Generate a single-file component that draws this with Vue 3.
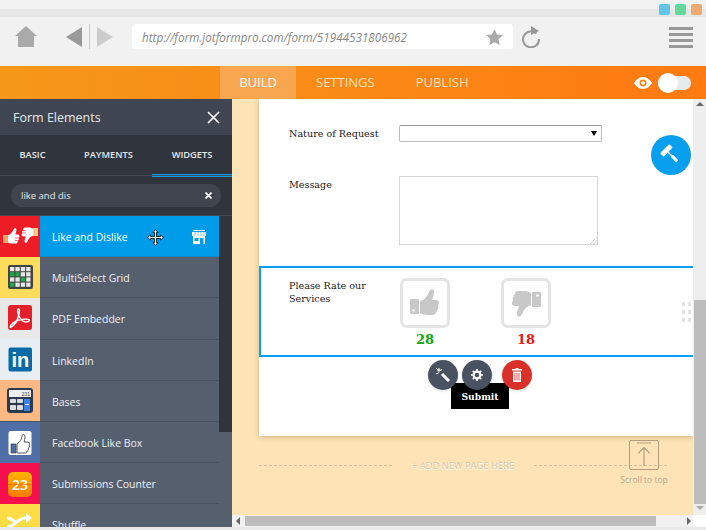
<script setup>
const tabs = [
  { name: 'BASIC', active: false },
  { name: 'PAYMENTS', active: false },
  { name: 'WIDGETS', active: true }
]

const widgets = [
  { id: 'like', title: 'Like and Dislike', bg: '#ee1c25' },
  { id: 'grid', title: 'MultiSelect Grid', bg: '#fddc5c' },
  { id: 'pdf', title: 'PDF Embedder', bg: '#e8e8e8' },
  { id: 'linkedin', title: 'LinkedIn', bg: '#e8eef1' },
  { id: 'bases', title: 'Bases', bg: '#fdb983' },
  { id: 'fb', title: 'Facebook Like Box', bg: '#4f6fa6' },
  { id: 'counter', title: 'Submissions Counter', bg: '#f5104d' },
  { id: 'shuffle', title: 'Shuffle', bg: '#fddc45' }
]

const gridCells = [
  0, 0, 0, 0,
  1, 1, 0, 0,
  0, 0, 1, 0,
  1, 0, 0, 0
]

const hand = 'M10 13c4-1 7-4 9-9 1-3 5-4 5 0 0 3-1 5-2 8h4c2 0 3 1 3 3 0 1-.5 2-1 2.500.5 1 .5 2.500-.5 3.500 0 1.500-.5 2.500-1.500 3 0 2-1 3-3 3h-6c-3 0-5-1-7-2z'
</script>

<template>
  <div class="page">
    <div class="titlebar">
      <span class="dot blue"></span>
      <span class="dot green"></span>
      <span class="dot peach"></span>
    </div>

    <div class="toolbar">
      <svg class="home" width="22" height="21" viewBox="0 0 22 21"><path d="M11 0 22 10h-3v11H3V10H0z" fill="#aaa" /></svg>
      <svg class="back" width="17" height="20" viewBox="0 0 17 20"><path d="M16 0v20L0 10z" fill="#999" /></svg>
      <span class="nav-sep"></span>
      <svg class="forward" width="17" height="20" viewBox="0 0 17 20"><path d="M1 0v20l16-10z" fill="#ccc" /></svg>
      <div class="url">
        <span>http://form.jotformpro.com/form/51944531806962</span>
        <svg width="17" height="16" viewBox="0 0 24 23"><path d="M12 0l3.6 7.8 8.4 1-6.2 5.8 1.6 8.4L12 18.900 4.600 23l1.600-8.400L0 8.800l8.400-1z" fill="#aaa" /></svg>
      </div>
      <svg class="reload" width="20" height="22" viewBox="0 0 20 22"><path d="M15.500 7.500A8 8 0 1 0 18 13" fill="none" stroke="#999" stroke-width="2" /><path d="M10 0l8 5-8 4z" fill="#999" /></svg>
      <div class="burger"><i></i><i></i><i></i><i></i></div>
    </div>

    <div class="topnav">
      <a class="active">BUILD</a>
      <a class="settings">SETTINGS</a>
      <a class="publish">PUBLISH</a>
      <svg class="eye" width="18" height="12" viewBox="0 0 18 12"><path d="M9 0c4 0 7 3 9 6-2 3-5 6-9 6S2 9 0 6c2-3 5-6 9-6z" fill="#fff" /><circle cx="9" cy="6" r="3.400" fill="#f98216" /><circle cx="9" cy="6" r="1.800" fill="#fff" /></svg>
      <div class="toggle"><span></span></div>
    </div>

    <div class="main">
      <aside class="panel">
        <div class="panel-head">
          <span>Form Elements</span>
          <svg width="13" height="13" viewBox="0 0 13 13"><path d="M1 1l11 11M12 1 1 12" stroke="#fff" stroke-width="1.700" /></svg>
        </div>
        <div class="tabs">
          <div v-for="tab in tabs" :key="tab.name" class="tab" :class="{ on: tab.active }">{{ tab.name }}</div>
        </div>
        <div class="search-wrap">
          <div class="search">
            <span>like and dis</span>
            <svg width="7" height="7" viewBox="0 0 7 7"><path d="M.5.5l6 6M6.500.5l-6 6" stroke="#fff" stroke-width="1.600" /></svg>
          </div>
        </div>
        <div class="list-wrap">
          <ul class="list">
            <li v-for="(w, i) in widgets" :key="w.id" class="row" :class="{ selected: i === 0 }">
              <div class="row-icon" :style="{ background: w.bg }">
                <svg v-if="w.id === 'like'" width="40" height="41" viewBox="0 0 40 41">
                  <rect x="3" y="19" width="5" height="8" fill="#f4a460" />
                  <rect x="33" y="12" width="5" height="8" fill="#f8c98a" />
                  <g transform="translate(2 11.400) scale(.6)"><path :d="hand" fill="#fff" /></g>
                  <g transform="translate(39 27.600) rotate(180) scale(.6)"><path :d="hand" fill="#fff" /></g>
                  <path d="M15 22h5M15 24.500h5M21 17h5M21 14.500h5" stroke="#ee1c25" stroke-width=".6" />
                </svg>
                <svg v-else-if="w.id === 'grid'" width="40" height="41" viewBox="0 0 40 41">
                  <rect x="8" y="8" width="25" height="24" rx="2" fill="#444" />
                  <rect v-for="(c, k) in gridCells" :key="k" :x="10 + (k % 4) * 5.400" :y="10 + Math.floor(k / 4) * 5.200" width="4.300" height="4.200" :fill="c ? '#1fa84a' : '#e8e8e8'" />
                </svg>
                <svg v-else-if="w.id === 'pdf'" width="40" height="41" viewBox="0 0 40 41">
                  <rect x="8" y="7" width="24" height="25" rx="3" fill="#e3202c" />
                  <path d="M10.500 29.500c4.500-2.500 7.500-8 8.500-13.500.5-3 .8-5-.5-5s-1 3.500 0 6c1.500 3.500 4.500 7 7.500 7 3.500 0 4.500-2 2.500-2.500-3-1-9 0-13 2-3 1.500-6.500 5-5 6" fill="none" stroke="#fff" stroke-width="1.400" />
                </svg>
                <svg v-else-if="w.id === 'linkedin'" width="40" height="41" viewBox="0 0 40 41">
                  <rect x="8.500" y="8.500" width="23.500" height="24" rx="2" fill="#0a6aa6" />
                  <text x="20.300" y="28" text-anchor="middle" class="in-text">in</text>
                </svg>
                <svg v-else-if="w.id === 'bases'" width="40" height="41" viewBox="0 0 40 41">
                  <rect x="7" y="8" width="26" height="25" rx="3" fill="#2c3a50" />
                  <rect x="9" y="10" width="22" height="7" fill="#eee" />
                  <text x="30" y="16" text-anchor="end" class="calc-text">231</text>
                  <rect x="10" y="19" width="6" height="4" rx="1" fill="#ddd" />
                  <rect x="17" y="19" width="6" height="4" rx="1" fill="#ddd" />
                  <rect x="10" y="25" width="6" height="5" rx="1" fill="#ddd" />
                  <rect x="17" y="25" width="6" height="5" rx="1" fill="#ddd" />
                  <rect x="24" y="19" width="6" height="12" fill="#3b82e6" />
                  <rect x="25" y="24" width="4" height="1" fill="#fff" />
                </svg>
                <svg v-else-if="w.id === 'fb'" width="40" height="41" viewBox="0 0 40 41">
                  <rect x="8.500" y="9" width="23" height="24" rx="2" fill="#fff" />
                  <rect x="11" y="22" width="5" height="9" fill="#4f6fa6" stroke="#333" stroke-width=".6" />
                  <path d="M17 22c3-2 5-5 5-8 0-2 3-2 3 1 0 2-.5 3-1 5h4c2 0 2 2 1 3 1 1 .5 3-.5 3 .5 2-.5 3-1.500 3 0 2-1 2-3 2h-7z" fill="#fff" stroke="#444" stroke-width=".9" />
                </svg>
                <svg v-else-if="w.id === 'counter'" width="40" height="41" viewBox="0 0 40 41">
                  <defs><linearGradient id="cnt" x1="0" y1="0" x2="0" y2="1"><stop offset="0" stop-color="#ffb400" /><stop offset="1" stop-color="#f97a00" /></linearGradient></defs>
                  <rect x="8" y="9" width="24" height="25" rx="5" fill="url(#cnt)" />
                  <text x="20" y="26.500" text-anchor="middle" class="cnt-text">23</text>
                  <rect x="8" y="21" width="24" height=".8" fill="#e06a00" />
                </svg>
                <svg v-else width="40" height="41" viewBox="0 0 40 41">
                  <path d="M7 23c8 0 10-9 19-9" fill="none" stroke="#fff" stroke-width="3" />
                  <path d="M7 14c4 0 6 2 8 4" fill="none" stroke="#fff" stroke-width="3" />
                  <path d="M26 9l6 5-6 5z" fill="#fff" />
                </svg>
              </div>
              <span class="row-title">{{ w.title }}</span>
              <template v-if="i === 0">
                <svg class="move" width="17" height="17" viewBox="0 0 17 17"><path d="M8.500.5 11 3.500H9.500v4h4V6l3 2.500-3 2.500V9.500h-4v4H11L8.500 16.500 6 13.500h1.500v-4h-4V11l-3-2.500 3-2.500v1.500h4v-4H6z" fill="#fff" stroke="#000" stroke-width=".8" /></svg>
                <svg class="store" width="14" height="15" viewBox="0 0 14 15"><path d="M1 1h12v1H1zM0 3h14v4H0zM1 7h12v8H1z" fill="#fff" /><rect x="2.500" y="9" width="4" height="3" fill="#009be9" /><rect x="8" y="9" width="3.500" height="6" fill="#009be9" /><path d="M3 3v4M6 3v4M9 3v4M12 3v4" stroke="#009be9" stroke-width=".6" /></svg>
              </template>
            </li>
          </ul>
          <div class="list-scroll"><div></div></div>
        </div>
      </aside>

      <section class="workspace">
        <div class="viewport">
          <div class="canvas">
            <div class="card">
              <div class="field first">
                <label>Nature of Request</label>
                <div class="select"><svg width="6" height="5" viewBox="0 0 6 5"><path d="M0 0h6L3 5z" fill="#000" /></svg></div>
              </div>
              <div class="field second">
                <label>Message</label>
                <div class="textarea">
                  <svg width="7" height="7" viewBox="0 0 7 7"><path d="M0 7l7-7M3.500 7 7 3.500" stroke="#999" stroke-width=".8" stroke-dasharray="1 1" /></svg>
                </div>
              </div>

              <div class="widget-row">
                <label>Please Rate our Services</label>
                <div class="vote">
                  <div class="vote-box">
                    <svg width="30" height="30" viewBox="0 0 30 30"><rect y="11" width="9" height="15" rx="1" fill="#c8c8c8" /><circle cx="3.500" cy="22.500" r="1.300" fill="#fff" /><path :d="hand" fill="#c8c8c8" /></svg>
                  </div>
                  <span class="count good">28</span>
                </div>
                <div class="vote">
                  <div class="vote-box">
                    <svg width="30" height="30" viewBox="0 0 30 30"><g transform="rotate(180 15 15)"><rect y="11" width="9" height="15" rx="1" fill="#c8c8c8" /><circle cx="3.500" cy="22.500" r="1.300" fill="#fff" /><path :d="hand" fill="#c8c8c8" /></g></svg>
                  </div>
                  <span class="count bad">18</span>
                </div>
                <div class="grip"><i v-for="n in 6" :key="n"></i></div>

                <div class="actions">
                  <span class="act dark">
                    <svg width="14" height="14" viewBox="0 0 14 14"><path d="M6 6l7 7" stroke="#fff" stroke-width="3" /><path d="M3 0v4M1 2h4M6 1 4.500 3M0 6l3-1.500M0 0l3 3" stroke="#fff" stroke-width="1" /></svg>
                  </span>
                  <span class="act dark">
                    <svg width="12" height="12" viewBox="0 0 12 12"><circle cx="6" cy="6" r="3.400" fill="none" stroke="#fff" stroke-width="2.200" /><path d="M6 0v2.500M6 9.500V12M0 6h2.500M9.500 6H12M1.800 1.800l1.700 1.700M8.500 8.500l1.700 1.700M10.200 1.800 8.500 3.500M3.500 8.500l-1.700 1.700" stroke="#fff" stroke-width="1.700" /></svg>
                  </span>
                  <span class="act red">
                    <svg width="10" height="14" viewBox="0 0 10 14"><path d="M3.500 0h3v1H10v1.500H0V1h3.500zM1 3.500h8V14H1z" fill="#fff" /><path d="M3 5v7.500M5 5v7.500M7 5v7.500" stroke="#d9302a" stroke-width=".8" /></svg>
                  </span>
                </div>
              </div>

              <div class="submit-wrap"><button class="submit">Submit</button></div>
            </div>

            <div class="add-page">
              <span class="dash"></span>
              <span class="add-text">+ ADD NEW PAGE HERE</span>
              <span class="dash"></span>
            </div>

            <div class="scroll-top">
              <div class="scroll-box">
                <svg width="16" height="24" viewBox="0 0 16 24"><path d="M1 1h14M8 24V6M2.500 11 8 5.500l5.500 5.500" fill="none" stroke="#b29f7f" stroke-width="1.200" /></svg>
              </div>
              <span>Scroll to top</span>
            </div>

            <div class="fab">
              <svg width="22" height="22" viewBox="0 0 22 22"><g transform="rotate(-45 11 11)"><rect x="4.500" y="2" width="13" height="5" rx="1" fill="#fff" /><rect x="10.300" y="7" width="1.400" height="6" fill="#fff" /><rect x="9.500" y="12" width="3" height="8" rx="1" fill="#fff" /></g></svg>
            </div>
          </div>

          <div class="vbar">
            <span class="arrow-up"></span>
            <div class="vthumb"></div>
            <span class="arrow-down"></span>
          </div>
        </div>

        <div class="hbar">
          <span class="arrow-left"></span>
          <div class="hthumb"></div>
          <span class="arrow-right"></span>
          <span class="corner"></span>
        </div>
      </section>
    </div>
  </div>
</template>

<style>
html, body {
  margin: 0;
  background: #f0f0f0;
}
</style>

<style scoped>
.page {
  width: 706px;
  height: 530px;
  overflow: hidden;
  display: flex;
  flex-direction: column;
  background: #e9e9e9;
  font-family: "Open Sans", sans-serif;
}

.titlebar {
  height: 17px;
  box-sizing: border-box;
  background: linear-gradient(#f2f2f2 9px, #e6e6e6 9px);
  display: flex;
  justify-content: flex-end;
  align-items: flex-start;
  gap: 5px;
  padding: 4px 4px 0 0;
}
.dot {
  width: 11px;
  height: 11px;
  border-radius: 2px;
}
.dot.blue { background: #62c5e8; }
.dot.green { background: #62d79a; }
.dot.peach { background: #eeaa70; }

.toolbar {
  height: 49px;
  background: #f1f1f1;
  display: flex;
  align-items: flex-start;
  position: relative;
}
.home { margin: 9px 0 0 15px; }
.back { margin: 10px 0 0 29px; }
.nav-sep {
  width: 1px;
  height: 25px;
  margin: 7px 6px 0 6px;
  background: #c8c8c8;
}
.forward { margin-top: 10px; }
.url {
  width: 381px;
  height: 25px;
  margin: 7px 0 0 19px;
  box-sizing: border-box;
  padding: 0 10px;
  background: #fff;
  border-radius: 3px;
  display: flex;
  align-items: center;
  justify-content: space-between;
  font-size: 11.700px;
  font-style: italic;
  color: #888;
}
.reload { margin: 9px 0 0 8px; }
.burger {
  margin: 10px 0 0 128px;
  width: 24px;
  display: flex;
  flex-direction: column;
  gap: 3px;
}
.burger i {
  height: 3px;
  background: #999;
}

.topnav {
  height: 33px;
  background: linear-gradient(90deg, #f5981a, #ff7a12);
  display: flex;
  align-items: center;
  color: #ffe0b8;
  font-size: 13px;
}
.topnav a {
  line-height: 33px;
}
.topnav .active {
  width: 76px;
  margin-left: 220px;
  text-align: center;
  background: #f9a650;
  color: #fff;
}
.settings { margin-left: 20px; }
.publish { margin-left: 41px; }
.eye { margin-left: 165px; }
.toggle {
  width: 33px;
  height: 14px;
  margin-left: 6px;
  border-radius: 7px;
  background: #e6ecec;
  position: relative;
}
.toggle span {
  position: absolute;
  left: 0;
  top: -3px;
  width: 20px;
  height: 20px;
  border-radius: 50%;
  background: #fff;
}

.main {
  height: 428px;
  display: flex;
}

.panel {
  width: 232px;
  flex: none;
  display: flex;
  flex-direction: column;
  background: #2f343d;
  color: #fff;
}
.panel-head {
  height: 36px;
  flex: none;
  box-sizing: border-box;
  background: #3f4652;
  display: flex;
  align-items: center;
  justify-content: space-between;
  padding: 1px 12px 0 13px;
  font-size: 12.500px;
  color: #e4e6e9;
}
.tabs {
  height: 40px;
  flex: none;
  display: grid;
  grid-template-columns: 65px 87px 80px;
}
.tab {
  box-sizing: border-box;
  text-align: center;
  font-size: 9.300px;
  font-weight: 600;
  line-height: 39px;
  color: #e6e8ea;
}
.tab.on {
  border-bottom: 3px solid #009be9;
}
.search-wrap {
  height: 41px;
  flex: none;
  box-sizing: border-box;
  border-top: 1px solid #444a55;
  border-bottom: 1px solid #444a55;
  padding: 8px 11px 0;
}
.search {
  height: 23px;
  border-radius: 12px;
  background: #40454f;
  display: flex;
  align-items: center;
  justify-content: space-between;
  padding: 0 9px 0 10px;
  font-size: 9.500px;
  color: #e8e8e8;
}

.list-wrap {
  flex: 1;
  min-height: 0;
  display: flex;
  overflow: hidden;
}
.list {
  width: 219px;
  flex: none;
  margin: 0;
  padding: 0;
  list-style: none;
}
.row {
  height: 41.200px;
  box-sizing: border-box;
  display: flex;
  align-items: center;
  background: #555f6e;
  border-bottom: 1px solid #4a5361;
  font-size: 10.500px;
  color: #eef0f2;
  position: relative;
}
.row.selected {
  background: #009be9;
  color: #fff;
  border-bottom-color: #0a86c6;
}
.row-icon {
  width: 40px;
  height: 41px;
  flex: none;
}
.row-icon svg {
  display: block;
}
.row-title {
  margin-left: 12px;
  padding-top: 2px;
}
.move {
  position: absolute;
  left: 147px;
  top: 13px;
}
.store {
  position: absolute;
  left: 192px;
  top: 13px;
}
.in-text {
  font: 700 20px "Liberation Sans", sans-serif;
  fill: #fff;
}
.calc-text {
  font: 5px "Liberation Sans", sans-serif;
  fill: #444;
}
.cnt-text {
  font: 600 14px "Open Sans", sans-serif;
  fill: #fff;
}
.list-scroll {
  width: 13px;
  flex: none;
  background: #555f6e;
}
.list-scroll div {
  height: 216px;
  background: #2f343d;
}

.workspace {
  flex: 1;
  min-width: 0;
  display: flex;
  flex-direction: column;
}
.viewport {
  flex: 1;
  min-height: 0;
  display: flex;
}
.canvas {
  flex: 1;
  min-width: 0;
  padding-left: 27px;
  background: #fde3b5;
  position: relative;
  overflow: hidden;
  font-family: "DejaVu Serif", serif;
  color: #222;
}
.card {
  height: 337px;
  background: #fff;
  box-shadow: 0 1px 5px rgba(120, 90, 40, 0.35);
  padding-top: 26px;
  box-sizing: border-box;
}
.field {
  display: flex;
  padding-left: 30px;
}
.field label {
  width: 110px;
  flex: none;
  padding-top: 1px;
  font-size: 9.600px;
  line-height: 16px;
}
.field.second {
  margin-top: 34px;
}
.select {
  width: 203px;
  height: 17px;
  box-sizing: border-box;
  border: 1px solid #bbb;
  border-top-color: #999;
  border-radius: 2px;
  display: flex;
  align-items: center;
  justify-content: flex-end;
  padding-right: 4px;
}
.textarea {
  width: 199px;
  height: 69px;
  box-sizing: border-box;
  border: 1px solid #d4d4d4;
  position: relative;
}
.textarea svg {
  position: absolute;
  right: 0;
  bottom: 0;
}

.widget-row {
  margin-top: 21px;
  height: 91px;
  box-sizing: border-box;
  border: 2px solid #08a0ee;
  border-right: 0;
  padding: 10px 0 0 28px;
  display: flex;
  align-items: flex-start;
  position: relative;
}
.widget-row label {
  width: 84px;
  flex: none;
  margin-top: 1px;
  margin-right: 27px;
  font-size: 9.600px;
  line-height: 13px;
}
.vote {
  width: 50px;
  margin-right: 51px;
  display: flex;
  flex-direction: column;
  align-items: center;
}
.vote-box {
  width: 50px;
  height: 50px;
  box-sizing: border-box;
  border: 3px solid #e4e4e4;
  border-radius: 7px;
  display: flex;
  align-items: center;
  justify-content: center;
}
.count {
  margin-top: 2px;
  font-size: 13px;
  font-weight: 700;
  line-height: 19px;
}
.good { color: #0aa80a; }
.bad { color: #f01414; }
.grip {
  position: absolute;
  left: 421px;
  top: 34px;
  display: grid;
  grid-template-columns: 3px 3px;
  gap: 4px 3px;
}
.grip i {
  width: 3px;
  height: 4px;
  border-radius: 1px;
  background: #e2e2e2;
}
.actions {
  position: absolute;
  left: 167px;
  top: 92px;
  display: flex;
  gap: 4px;
  z-index: 2;
}
.act {
  width: 30px;
  height: 30px;
  border-radius: 50%;
  display: flex;
  align-items: center;
  justify-content: center;
  box-shadow: 0 1px 3px rgba(0, 0, 0, 0.15);
}
.act.dark { background: #495260; }
.act.red {
  background: #d9302a;
  margin-left: 6px;
}

.submit-wrap {
  margin-top: 26px;
  margin-left: 192px;
}
.submit {
  display: block;
  width: 58px;
  height: 26px;
  border: 0;
  padding: 0;
  background: #000;
  color: #fff;
  font-family: "DejaVu Serif", serif;
  font-size: 9.200px;
  font-weight: 700;
}

.add-page {
  height: 59px;
  margin-left: -27px;
  padding-left: 27px;
  display: flex;
  align-items: center;
  color: #fff;
}
.dash {
  width: 133px;
  flex: none;
  border-top: 1px dashed #d9c49f;
}
.add-text {
  width: 142px;
  flex: none;
  text-align: center;
  font-family: "Open Sans", sans-serif;
  font-size: 9.400px;
  color: #d6c8ad;
  text-shadow: 0 1px 0 #fff;
}
.scroll-top {
  position: absolute;
  left: 386px;
  top: 341px;
  width: 52px;
  display: flex;
  flex-direction: column;
  align-items: center;
  font-family: "Open Sans", sans-serif;
  font-size: 8.500px;
  color: #b7a88e;
}
.scroll-box {
  width: 30px;
  height: 30px;
  box-sizing: border-box;
  border: 1px solid #b29f7f;
  border-radius: 2px;
  display: flex;
  align-items: flex-end;
  justify-content: center;
  padding-bottom: 3px;
  margin-bottom: 4px;
}
.fab {
  position: absolute;
  left: 419px;
  top: 36px;
  width: 40px;
  height: 40px;
  border-radius: 50%;
  background: #08a0ee;
  display: flex;
  align-items: center;
  justify-content: center;
}

.vbar {
  width: 13px;
  flex: none;
  background: #eee;
  display: flex;
  flex-direction: column;
  align-items: center;
  justify-content: space-between;
  position: relative;
}
.arrow-up, .arrow-down, .arrow-left, .arrow-right {
  width: 0;
  height: 0;
  flex: none;
  border: 4px solid transparent;
}
.arrow-up {
  border-bottom-color: #666;
  border-top: 0;
  margin-top: 3px;
}
.arrow-down {
  border-top-color: #aaa;
  border-bottom: 0;
  margin-bottom: 5px;
}
.vthumb {
  position: absolute;
  left: 1px;
  right: 0;
  top: 201px;
  bottom: 11px;
  background: #bdbdbd;
}
.hbar {
  height: 12px;
  flex: none;
  background: #f1f1f1;
  display: flex;
  align-items: center;
}
.arrow-left {
  border-right-color: #666;
  border-left: 0;
  margin-left: 4px;
}
.hthumb {
  width: 411px;
  height: 10px;
  margin-left: 5px;
  background: #bdbdbd;
}
.arrow-right {
  border-left-color: #666;
  border-right: 0;
  margin-left: 31px;
}
.corner {
  width: 13px;
  height: 12px;
  margin-left: auto;
  background: #fff;
}
</style>
